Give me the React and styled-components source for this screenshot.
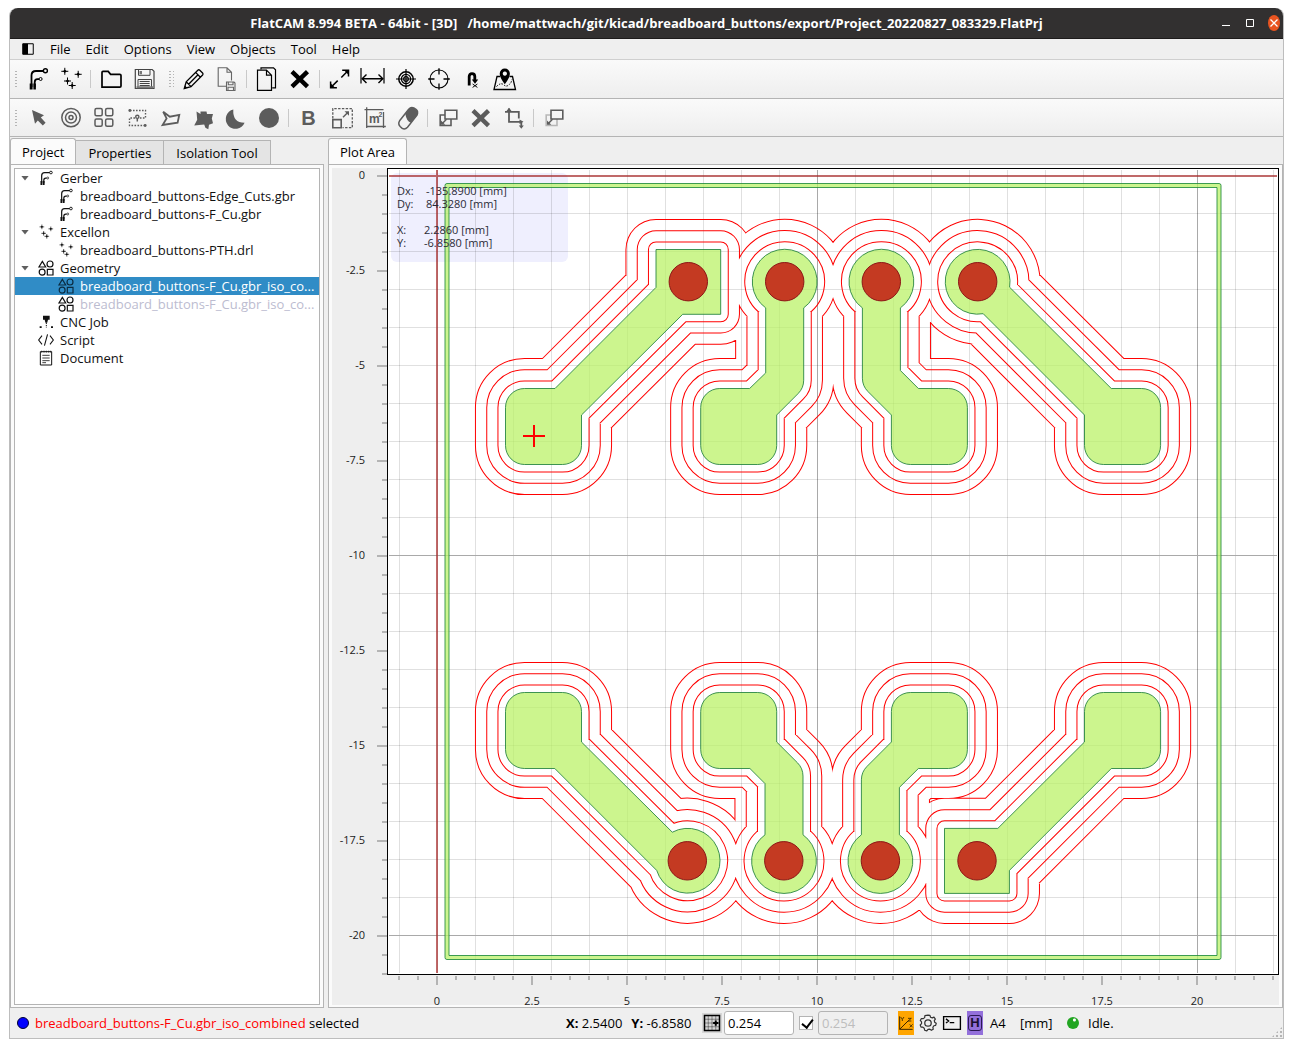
import { useState } from "react";
import styled, { createGlobalStyle, css } from "styled-components";

const GlobalStyle = createGlobalStyle`
    * {
        box-sizing: border-box;
    }

    body {
        margin: 0;
        background: #ffffff;
        color: #000000;
        font-family: "Open Sans", "Noto Sans", sans-serif;
        font-size: 13px;
        line-height: 18px;
    }

    button, input {
        font: inherit;
        color: inherit;
    }
`;

/* ---------- icons ---------- */

const Icon = styled.svg.attrs({ viewBox: "0 0 24 24", "aria-hidden": true })`
    width: ${(props) => props.$size || 24}px;
    height: ${(props) => props.$size || 24}px;
    flex: none;
    display: block;
    overflow: visible;
    fill: none;
    stroke: currentColor;
    stroke-width: 1.5;
`;

const GerberIcon = ({ size }) => (
    <Icon $size={size}>
        <path d="M5.5 20V8.5Q5.5 4 10 4H17.5M8.7 20V15.5Q8.7 12.2 11.5 12.2H13" strokeWidth="1.8" />
        <circle cx="19.4" cy="3.8" r="2" strokeWidth="1.4" />
        <circle cx="14.6" cy="12" r="1.5" strokeWidth="1" />
        <path d="M3.7 16.5H6.6V22.5H3.7ZM7.4 16.5H9.9V22.5H7.4Z" fill="currentColor" stroke="none" />
    </Icon>
);

const ExcellonIcon = ({ size }) => (
    <Icon $size={size}>
        <path d="M5.8 .8V7.8M2.3 4.3H9.3M19.2 3.8V10.8M15.7 7.3H22.7M8.5 10.5V17.5M5 14H12M13.2 15V22M9.7 18.5H16.7" strokeWidth="1" />
        <path d="M5.8 2.5L7.6 4.3 5.8 6.1 4 4.3ZM19.2 5.5L21 7.3 19.2 9.1 17.4 7.3ZM8.5 12.2L10.3 14 8.5 15.8 6.7 14ZM13.2 16.7L15 18.5 13.2 20.3 11.4 18.5Z" fill="currentColor" stroke="none" />
    </Icon>
);

const GeometryIcon = ({ size }) => (
    <Icon $size={size}>
        <path d="M6.5 2L11.5 10.5H1.5ZM14 14H22.5V22.5H14Z" strokeWidth="1.8" />
        <circle cx="18" cy="6" r="4.5" strokeWidth="1.8" />
        <circle cx="6.2" cy="18.2" r="4.4" strokeWidth="1.8" />
    </Icon>
);

const CncIcon = ({ size }) => (
    <Icon $size={size}>
        <path d="M7.5 2.5H17.5V8.5H15L13.8 13H11.2L10 8.5H7.5Z" fill="currentColor" stroke="none" />
        <path d="M12.5 13V20.5" strokeWidth="1.5" strokeDasharray="2 1.4" />
        <path d="M2.5 18.5H5.5V21H2.5ZM19.5 18.5H22.5V21H19.5Z" fill="currentColor" stroke="none" />
    </Icon>
);

const ScriptIcon = ({ size }) => (
    <Icon $size={size}>
        <path d="M6 5.5L1 12 6 18.5M18 5.5L23 12 18 18.5M14.3 3.5L9.7 20.5" strokeWidth="1.6" />
    </Icon>
);

const DocumentIcon = ({ size }) => (
    <Icon $size={size}>
        <path d="M3.5 2.5H20.5V22.5H3.5Z" strokeWidth="1.5" />
        <path d="M6.5 8H17.5M6.5 12H17.5M6.5 16H17.5M6.5 19H12" strokeWidth="1.2" />
        <path d="M5.5 1V4M9 1V4M12.5 1V4M16 1V4M19 1V4" strokeWidth="1" />
    </Icon>
);

const FolderIcon = () => (
    <Icon>
        <path d="M3 20.2V5.4Q3 4.4 4 4.4H9.2L11.6 7.4H20.8Q22 7.4 22 8.6V19Q22 20.2 20.8 20.2Z" strokeWidth="1.7" />
    </Icon>
);

const SaveIcon = () => (
    <Icon color="#444">
        <path d="M3.3 2.5H20.2L22 4.3V21.5H3.3Z" strokeWidth="1.2" />
        <path d="M6.5 2.5V8.3H18V2.5M6 21.5V12.5H19.5V21.5M7.7 14.5H17.7M7.7 16.5H17.7M7.7 18.5H17.7" strokeWidth="1" />
        <path d="M7.5 4H10V7.3H7.5ZM4.5 19.2H21V21.3H4.5Z" fill="#777" stroke="none" />
    </Icon>
);

const PencilIcon = () => (
    <Icon>
        <path d="M2.3 21.5L4.2 14.8 15.8 3.2Q16.8 2.3 17.8 3.2L20.6 6Q21.5 7 20.6 8L9 19.6ZM4.2 14.8L9 19.6M13.6 5.4L18.4 10.2M6.6 17.2L16 7.8" strokeWidth="1.3" />
        <path d="M2.3 21.5L3 18.6 5.2 20.8Z" fill="currentColor" stroke="none" />
    </Icon>
);

const DocSaveIcon = () => (
    <Icon color="#666">
        <path d="M11 19.3H3.2V.8H12L16.5 5.3V13.5M12 .8V5.3H16.5" strokeWidth="1.1" />
        <path d="M11.5 15H19L20 16V23.5H11.5ZM13.3 15V17.8H18V15M13 23.5V20.3H18.5V23.5" strokeWidth="1.1" />
    </Icon>
);

const CopyIcon = () => (
    <Icon>
        <path d="M2.5 3.2H11.5L16.5 8.2V23.3H2.5ZM11.5 3.2V8.2H16.5" strokeWidth="1.2" />
        <path d="M6 2.6V.8H18.5L20.5 2.8V20.8H17.2" strokeWidth="1.2" />
    </Icon>
);

const CrossIcon = () => (
    <Icon>
        <path d="M4 4.6L19.5 19.6M19.5 4.6L4 19.6" strokeWidth="4.4" />
    </Icon>
);

const ExpandIcon = () => (
    <Icon>
        <path d="M13.3 10.5L20 3.8M3 20.3L9.7 13.6M14.2 3.3H20.5V9.6M2.6 14.6V20.8H8.9" strokeWidth="1.5" />
        <path d="M16 3.3H20.5V7.8ZM2.6 16.3V20.8H7.1Z" fill="currentColor" stroke="none" />
    </Icon>
);

const DistanceIcon = () => (
    <Icon>
        <path d="M0 1V16.5M23 1V16.5" strokeWidth="1.2" />
        <path d="M1 11.7H22M5.5 7.5L1.2 11.7 5.5 16M17.5 7.5L21.8 11.7 17.5 16" strokeWidth="1.4" />
    </Icon>
);

const TargetIcon = () => (
    <Icon>
        <circle cx="12" cy="12" r="7.2" />
        <circle cx="12" cy="12" r="4.6" strokeWidth="1.2" />
        <circle cx="12" cy="12" r="2.3" strokeWidth="1.2" />
        <path d="M12 2V22M2 12H22" strokeWidth="1.2" />
    </Icon>
);

const CrosshairIcon = () => (
    <Icon>
        <circle cx="12" cy="12" r="9" strokeWidth="1.1" />
        <path d="M12 1.2V7.5M12 16.5V22.8M1.2 12H7.5M16.5 12H22.8" strokeWidth="1.3" />
    </Icon>
);

const SnapIcon = () => (
    <Icon>
        <path d="M9.2 18.5V9.6Q9.2 6.6 12 6.6T14.8 9.6V13" strokeWidth="2.8" />
        <path d="M11.8 12.5H18.2L15 16.8Z" fill="currentColor" stroke="none" />
        <path d="M12.6 17L17.4 20.4M17.4 17L12.6 20.4" strokeWidth="1" />
    </Icon>
);

const MapPinIcon = () => (
    <Icon>
        <path d="M7 9.5H4L1 22.5H22.5L19.5 9.5H16.5" strokeWidth="1.3" />
        <path d="M3.5 19.5Q8 15 11 18T18 15.5L19 12.5" strokeWidth="1" strokeDasharray="1.6 1.2" />
        <path d="M11.8 17.2Q6.7 10.5 6.7 6.7A5.1 5.1 0 0 1 16.9 6.7Q16.9 10.5 11.8 17.2ZM11.8 4.5A2.1 2.1 0 1 0 11.9 4.5Z" fill="currentColor" fillRule="evenodd" stroke="none" />
    </Icon>
);

const CursorIcon = () => (
    <Icon>
        <path d="M6 4L18 9.3 14.8 11.6 19.6 16.8 16.8 19.6 11.8 14.6 9 17.8Z" fill="currentColor" stroke="none" />
    </Icon>
);

const ApertureIcon = () => (
    <Icon>
        <circle cx="12" cy="11.6" r="9.2" />
        <circle cx="12" cy="11.6" r="5.5" />
        <circle cx="12" cy="11.6" r="2" />
    </Icon>
);

const ArrayIcon = () => (
    <Icon>
        <rect x="3" y="2.5" width="7.2" height="7.2" rx="1.5" />
        <rect x="13.6" y="2.5" width="7.2" height="7.2" rx="1.5" />
        <rect x="3" y="13" width="7.2" height="7.2" rx="1.5" />
        <rect x="13.6" y="13" width="7.2" height="7.2" rx="1.5" />
    </Icon>
);

const TrackIcon = () => (
    <Icon>
        <path d="M5 4.5H20.5V12H14M10 12H4.5V19.5H20" strokeWidth="1.4" strokeDasharray="1.6 1.4" />
        <circle cx="4.8" cy="4.5" r="1.4" fill="currentColor" stroke="none" />
        <circle cx="20.2" cy="19.5" r="1.4" fill="currentColor" stroke="none" />
        <circle cx="12.3" cy="10.8" r="1.6" strokeWidth="1.4" />
        <path d="M12.3 12.5V15.5" />
    </Icon>
);

const PolygonIcon = () => (
    <Icon>
        <path d="M5.2 5.8L11.8 10.7 21.3 8.8 19.6 16.6 4.6 19 8.6 12.4Z" strokeWidth="1.8" />
    </Icon>
);

const RegionIcon = () => (
    <Icon>
        <path d="M5.5 5.5L9.5 8V5.5H15.5L16 8H22L20.8 12.4 22 17.3 18 18.8 17.3 23.2 14.4 21.8 13.2 18.4 3.2 19.5 6.2 13.7Z" fill="currentColor" stroke="none" />
    </Icon>
);

const MoonIcon = () => (
    <Icon>
        <path d="M9.3 3.5Q8.5 16.8 20.6 16.8A9.8 9.8 0 1 1 9.3 3.5Z" fill="currentColor" stroke="none" />
    </Icon>
);

const DiscIcon = () => (
    <Icon>
        <circle cx="12" cy="12" r="10" fill="currentColor" stroke="none" />
    </Icon>
);

const ScaleIcon = () => (
    <Icon>
        <path d="M2.8 12.5V2.6H22.3V21.6H12.5" strokeDasharray="2.4 1.4" strokeWidth="1.3" />
        <path d="M2.8 13.6H11.2V21.8H2.8Z" strokeWidth="1.6" />
        <path d="M13 11.2L17.5 6.7" />
        <path d="M14.5 5.3H19V9.8Z" fill="currentColor" stroke="none" />
    </Icon>
);

const AreaIcon = () => (
    <Icon>
        <path d="M3.7 1.2V22M1.5 3.6H20.5M20.5 6V22M3.7 20.5H22.8" strokeWidth="1.3" />
        <text x="6" y="17" fontSize="12" fontWeight="bold" fill="currentColor" stroke="none">m</text>
        <text x="15.5" y="10.5" fontSize="7" fontWeight="bold" fill="currentColor" stroke="none">2</text>
    </Icon>
);

const EraserIcon = () => (
    <Icon>
        <path d="M3.6 14.8L12.7 3.2Q15 .6 17.8 2L20 3.4Q22.6 5.4 21 9.2L11.5 21.3Q9 24 6.2 22.4L4.4 20.8Q1.6 18 3.6 14.8Z" />
        <path d="M9.2 7.6L12.7 3.2Q15 .6 17.8 2L20 3.4Q22.6 5.4 21 9.2L15 16.8Q10.5 15.5 9.2 7.6Z" fill="currentColor" stroke="none" />
    </Icon>
);

const TransformIcon = ({ faint }) => (
    <Icon>
        <path d="M9 4.3H20.8V13H9Z" strokeWidth="1.6" />
        <path d="M9 9H4.2V19.5H15V13" strokeWidth="1.6" opacity={faint ? 0.4 : 1} />
        <path d="M5.8 18L10.5 13.3" />
        <path d="M5 14.5V18.8H9.3Z" fill="currentColor" stroke="none" />
    </Icon>
);

const MoveIcon = () => (
    <Icon>
        <path d="M7 2.5V15.8H19.3V21M3 5.8H16.8V12.5" strokeWidth="1.8" />
        <path d="M4.5 5L7 1.8 9.5 5ZM16.8 19.5H21.8L19.3 22.8ZM17.5 13.5V18L21.5 15.8Z" fill="currentColor" stroke="none" />
    </Icon>
);

const PanelIcon = () => (
    <Icon $size={12}>
        <path d="M1.5 1.5H22.5V22.5H1.5Z" strokeWidth="2" />
        <path d="M1.5 1.5H12V22.5H1.5Z" fill="currentColor" stroke="none" />
    </Icon>
);

const GridIcon = () => (
    <Icon $size={18}>
        <path d="M2 2H22V22H2Z" strokeWidth="2" />
        <path d="M7 2V22M12 2V22M17 2V22M2 7H22M2 12H22M2 17H22" strokeWidth="1" strokeOpacity=".5" />
        <path d="M17 8.5V15.5M13.5 12H20.5" strokeWidth="2.6" />
    </Icon>
);

const AxesIcon = () => (
    <Icon $size={16} color="#3a2600">
        <path d="M2.5 2V21.5H22M2.5 21.5L15 9" strokeWidth="1.5" />
        <path d="M4 3L6.5 6.5M9 3L6.5 6.5V9M15 5H20L15 9H20M17.5 14L22 18.5M22 14L17.5 18.5" strokeWidth="1.3" />
    </Icon>
);

const GearIcon = () => (
    <Icon $size={18} color="#333">
        <path d="M12 1.5L14.6 1.8 15.4 4.3 17.7 5.2 20 4.2 21.8 6.8 20.4 8.9 20.9 11 23 12.3 22.2 15.2 19.8 15.7 18.5 17.8 19 20.2 16.4 21.7 14.5 20.2 12 20.6 10.4 22.5 7.5 21.6 7 19 5.2 17.6 2.7 17.5 1.6 14.7 3.4 12.8V10.6L1.7 8.6 3.2 6 5.8 6.2 7.5 4.8 7.9 2.2Z" strokeWidth="1.6" strokeLinejoin="round" />
        <circle cx="12" cy="12" r="4.3" strokeWidth="1.7" />
    </Icon>
);

const ShellIcon = () => (
    <Icon $size={18}>
        <path d="M.8 3.5H23.2V20.5H.8Z" strokeWidth="1.8" />
        <path d="M4 6.5L7.5 9.3 4 12M9 11.5H15" strokeWidth="1.8" />
    </Icon>
);

/* ---------- window frame ---------- */

const Desktop = styled.div`
    height: 100vh;
    padding: 8px 9px 9px;
    display: flex;
`;

const Window = styled.main`
    flex: 1;
    min-width: 0;
    display: flex;
    flex-direction: column;
    background: #efefef;
    border: 1px solid #bdbdbd;
    border-top: 0;
    border-radius: 8px 8px 0 0;
`;

const TitleBar = styled.header`
    height: 31px;
    display: grid;
    grid-template-columns: 1fr auto 1fr;
    align-items: center;
    background: #323030;
    border-bottom: 1px solid #1d1b1b;
    border-radius: 8px 8px 0 0;
    color: #ffffff;
`;

const Title = styled.h1`
    grid-column: 2;
    margin: 0;
    font-size: 13px;
    line-height: 18px;
    font-weight: 700;
    white-space: pre;
`;

const WindowButtons = styled.div`
    display: flex;
    justify-content: flex-end;
    gap: 12px;
    padding-right: 3px;
`;

const WindowButton = styled.button`
    width: 12px;
    height: 16px;
    padding: 0;
    border: 0;
    border-radius: 50%;
    background: ${(props) => (props.$close ? "#e95420" : "transparent")};

    svg {
        display: block;
    }
`;

const MenuBar = styled.nav`
    height: 21px;
    display: flex;
    align-items: center;
    gap: 15px;
    padding-left: 12px;
    border-bottom: 1px solid #cfcfcf;
`;

const MenuItem = styled.button`
    padding: 0;
    border: 0;
    background: none;

    &:first-child {
        margin-right: 1px;
    }
`;

/* ---------- toolbars ---------- */

const ToolBar = styled.div`
    height: ${(props) => props.$height}px;
    display: flex;
    align-items: center;
    background: linear-gradient(#fafafa, #eeeeee);
    border-bottom: 1px solid #b4b4b4;
    color: ${(props) => (props.$dim ? "#5c5c5c" : "#000000")};
`;

const Handle = styled.span`
    width: ${(props) => (props.$first ? 11 : 17)}px;
    height: 18px;
    padding-left: ${(props) => (props.$first ? 4 : 8)}px;
    background: radial-gradient(circle, #b5b5b5 1px, transparent 1px) content-box;
    background-size: 4px 3px;
    border-right: 3px solid transparent;
`;

const ToolButton = styled.button`
    width: 33px;
    height: 32px;
    padding: 0;
    display: flex;
    align-items: center;
    justify-content: center;
    border: 0;
    background: none;
    font-family: "Liberation Sans", Arial, sans-serif;
    font-size: 20px;
    font-weight: 700;
`;

const Separator = styled.span`
    width: 1px;
    height: 18px;
    margin: 0 3px;
    background: #c9c9c9;
`;

/* ---------- panes ---------- */

const Workspace = styled.div`
    flex: 1;
    min-height: 0;
    display: flex;
    gap: 4px;
    padding-top: 1px;
`;

const Side = styled.section`
    width: 314px;
    flex: none;
    display: flex;
    flex-direction: column;
`;

const Main = styled.section`
    flex: 1;
    min-width: 0;
    display: flex;
    flex-direction: column;
`;

const Tabs = styled.div`
    height: 27px;
    display: flex;
    align-items: flex-end;
`;

const Tab = styled.button`
    height: 25px;
    padding: 0 12px;
    border: 1px solid #b4b4b4;
    border-left-width: 0;
    background: #e4e4e4;

    ${(props) => props.$active && css`
        height: 27px;
        padding: 0 11px;
        border-left-width: 1px;
        border-bottom-color: #fbfbfb;
        border-radius: 3px 3px 0 0;
        background: #fbfbfb;
    `}
`;

const Pane = styled.div`
    flex: 1;
    min-height: 0;
    display: flex;
    margin-top: -1px;
    padding: 3px 3px 2px;
    background: #fbfbfb;
    border: 1px solid #b4b4b4;
    border-top: 0;
    box-shadow: inset 0 1px 0 #b4b4b4;
`;

const Tree = styled.ul`
    flex: 1;
    min-width: 0;
    margin: 1px 0 0;
    padding: 0;
    list-style: none;
    background: #ffffff;
    border: 1px solid #b4b4b4;
`;

const TreeRow = styled.li`
    height: 18px;
    display: flex;
    align-items: center;
    gap: 6px;
    padding-left: ${(props) => (props.$child ? 43 : 6)}px;
    background: ${(props) => (props.$selected ? "#308cc6" : "none")};
    color: ${(props) => (props.$selected ? "#0b2c42" : "#111111")};
    white-space: nowrap;
    overflow: hidden;
`;

const Branch = styled.span`
    width: 11px;
    height: 5px;

    &::before {
        content: "";
        display: block;
        width: 8px;
        height: 5px;
        background: ${(props) => (props.$open ? "#5f5f5f" : "none")};
        clip-path: polygon(0 0, 100% 0, 50% 100%);
    }
`;

const TreeLabel = styled.span`
    color: ${(props) => props.$color || "#111111"};
`;

const PlotPane = styled(Pane)`
    padding: 4px 3px 2px;
`;

const Plot = styled.svg`
    flex: 1;
    min-width: 0;
    width: 100%;
    height: 100%;
    display: block;
    overflow: visible;
    background: #eeeeee;
    font-family: "Open Sans", "Noto Sans", sans-serif;
    font-size: 11px;
`;

/* ---------- status bar ---------- */

const StatusBar = styled.footer`
    height: 30px;
    display: flex;
    align-items: center;
    padding-left: 7px;
    white-space: nowrap;
`;

const Dot = styled.span`
    width: 12px;
    height: 12px;
    flex: none;
    border-radius: 50%;
    background: ${(props) => props.$fill};
    border: ${(props) => props.$edge || "0"};
`;

const Message = styled.span`
    flex: 1;
    min-width: 0;
    padding-left: 6px;
    overflow: hidden;

    em {
        color: #ff0000;
        font-style: normal;
    }
`;

const Position = styled.div`
    width: 136px;
    display: flex;
    gap: 9px;
`;

const StatusButton = styled.button`
    width: ${(props) => props.$width || 16}px;
    height: ${(props) => (props.$short ? 20 : 24)}px;
    margin-right: ${(props) => props.$after || 0}px;
    padding: 0;
    display: flex;
    flex: none;
    align-items: center;
    justify-content: center;
    border: 0;
    background: ${(props) => props.$fill || "none"};
`;

const GridInput = styled.input`
    width: 70px;
    height: 24px;
    flex: none;
    padding: 0 3px;
    border: 1px solid #b4b4b4;
    border-radius: 3px;
    background: #ffffff;

    &:disabled {
        margin-right: 10px;
        background: #efefef;
        color: #bdbdbd;
    }
`;

const CheckBox = styled.input`
    appearance: none;
    width: 14px;
    height: 14px;
    margin: 0 5px;
    flex: none;
    background: #ffffff;
    border: 1px solid #b4b4b4;

    &:checked::after {
        content: "";
        display: block;
        width: 5px;
        height: 9px;
        margin: 0 0 0 4px;
        border: solid #000000;
        border-width: 0 2px 2px 0;
        transform: rotate(38deg);
    }
`;

const HudKey = styled.span`
    width: 14px;
    height: 16px;
    border: 1px solid #2c1a55;
    border-radius: 3px;
    color: #1a1030;
    font: 700 13px/14px "Liberation Sans", Arial, sans-serif;
`;

const StatusText = styled.span`
    width: ${(props) => props.$width}px;
    padding-left: ${(props) => props.$before || 0}px;
    flex: none;
`;

const Grip = styled.span`
    width: 12px;
    height: 12px;
    flex: none;
    align-self: flex-end;
    background: radial-gradient(circle, #b5b5b5 1px, transparent 1px);
    background-size: 4px 4px;
    clip-path: polygon(100% 0, 100% 100%, 0 100%);
`;

/* ---------- plot ---------- */

const ORIGIN_X = 437;
const ORIGIN_Y = 175;
const MM = 38;

const range = (from, to, step = 1) => {
    const list = [];
    for (let v = from; v <= to; v += step) list.push(v);
    return list;
};

const TRACES = [
    "M656 249.5H720.7V314.3H682.7L581.5 415V445.5A19 19 0 0 1 562.5 464.5H524.5A19 19 0 0 1 505.5 445.5V407.5A19 19 0 0 1 524.5 388.5H555L656 287.4Z",
    "M765.7 307.9A32.4 32.4 0 1 1 803.7 307.9V380.2A19 19 0 0 1 798.1 393.6L776.7 415V445.5A19 19 0 0 1 757.7 464.5H719.7A19 19 0 0 1 700.7 445.5V407.5A19 19 0 0 1 719.7 388.5H749.6L765.7 372.9Z",
    "M862.4 307.9A32.4 32.4 0 1 1 900.4 307.9V370.5L918.4 388.5H948.4A19 19 0 0 1 967.4 407.5V445.5A19 19 0 0 1 948.4 464.5H910.4A19 19 0 0 1 891.4 445.5V415L868 391.6A19 19 0 0 1 862.4 378.2Z",
    "M1009.6 287.2L1111.3 388.5H1141.6A19 19 0 0 1 1160.6 407.5V445.5A19 19 0 0 1 1141.6 464.5H1103.5A19 19 0 0 1 1084.5 445.5V415L983.2 313.7A32.4 32.4 0 1 1 1009.6 287.2Z",
    "M524.5 692.5H562.5A19 19 0 0 1 581.5 711.5V742L672.3 832.2A32.4 32.4 0 1 1 656.7 870.4L554.8 768.5H524.5A19 19 0 0 1 505.5 749.5V711.5A19 19 0 0 1 524.5 692.5Z",
    "M719.7 692.5H757.7A19 19 0 0 1 776.7 711.5V742L797.4 762.7A19 19 0 0 1 803 776.1V834.8A32.4 32.4 0 1 1 765 834.8V783.6L749.9 768.5H719.7A19 19 0 0 1 700.7 749.5V711.5A19 19 0 0 1 719.7 692.5Z",
    "M910.4 692.5H948.4A19 19 0 0 1 967.4 711.5V749.5A19 19 0 0 1 948.4 768.5H918.4L899.4 787.4V834.8A32.4 32.4 0 1 1 861.4 834.8V779.8A19 19 0 0 1 867 766.4L891.4 742V711.5A19 19 0 0 1 910.4 692.5Z",
    "M944.5 828.4H997.8L1084.5 742V711.5A19 19 0 0 1 1103.5 692.5H1141.6A19 19 0 0 1 1160.6 711.5V749.5A19 19 0 0 1 1141.6 768.5H1111.3L1009.4 870.4V893.4H944.5Z",
];

const DRILLS = [
    [688.3, 281.7], [784.7, 281.7], [881.3, 281.7], [977.7, 281.7],
    [687.3, 860.8], [783.8, 860.8], [880.4, 860.8], [977, 860.8],
];

// distance of each isolation pass from the copper edge
const PASSES = [7.4, 18.6, 29.9];

function Isolation() {
    return (
        <>
            <defs>
                <path id="copper" d={TRACES.join("")} strokeLinejoin="round" />
                {PASSES.map((d, i) => (
                    <mask key={d} id={`pass-${i}`} maskUnits="userSpaceOnUse" x="388" y="169" width="890" height="805">
                        <use href="#copper" fill="#fff" stroke="#fff" strokeWidth={2 * d + 1.3} />
                        <use href="#copper" fill="#000" stroke="#000" strokeWidth={2 * d - 0.7} />
                    </mask>
                ))}
            </defs>
            {PASSES.map((d, i) => (
                <rect key={d} x="388" y="169" width="890" height="805" fill="#ff0000" mask={`url(#pass-${i})`} />
            ))}
        </>
    );
}

function PlotArea() {
    const columns = range(-1, 22);
    const rows = range(1, 20);
    const major = (mm) => mm === 10 || mm === 20;

    return (
        <Plot role="img" aria-label="Plot">
            <g transform="translate(-332 -168)">
                <rect x="387.5" y="168.5" width="891" height="806" fill="#ffffff" stroke="#000000" />

                <rect x="391" y="173" width="177" height="89" rx="6" fill="#efeffe" />

                {columns.map((mm) => (
                    <path key={mm} d={`M${ORIGIN_X + mm * MM + 0.5} 170V973`} stroke={major(mm) ? "#a9a9a9" : "#000000"} strokeOpacity={major(mm) ? 1 : 0.12} />
                ))}
                {rows.map((mm) => (
                    <path key={mm} d={`M389 ${ORIGIN_Y + mm * MM + 0.5}H1277`} stroke={major(mm) ? "#a9a9a9" : "#000000"} strokeOpacity={major(mm) ? 1 : 0.12} />
                ))}
                <path d="M437 170V973M389 176H1277" stroke="#a52a2a" strokeWidth="2" strokeOpacity=".7" />

                <path
                    d="M447 183.5H1219A2 2 0 0 1 1221 185.5V957.5A2 2 0 0 1 1219 959.5H447A2 2 0 0 1 445 957.5V185.5A2 2 0 0 1 447 183.5ZM449 187.5V955.5H1217V187.5Z"
                    fill="#bbf268" fillOpacity=".75" fillRule="evenodd" stroke="#1f8a3c" strokeOpacity=".85"
                />
                <use href="#copper" fill="#bbf268" fillOpacity=".75" stroke="#20803c" strokeOpacity=".85" />
                <Isolation />
                {DRILLS.map(([x, y]) => (
                    <circle key={`${x}-${y}`} cx={x} cy={y} r="19.2" fill="#c43a22" stroke="#8c1616" />
                ))}
                <path d="M523 436H545M534 425V447" stroke="#ff0000" strokeWidth="2" />

                <g fill="#2b2b36">
                    <text x="397" y="195">Dx:</text>
                    <text x="426" y="195">-135.8900 [mm]</text>
                    <text x="397" y="208">Dy:</text>
                    <text x="426" y="208">84.3280 [mm]</text>
                    <text x="397" y="234">X:</text>
                    <text x="424" y="234">2.2860 [mm]</text>
                    <text x="397" y="247">Y:</text>
                    <text x="424" y="247">-6.8580 [mm]</text>
                </g>

                <g stroke="#b4b4b4" strokeWidth="2">
                    {range(0, 42).map((n) => (
                        <path key={n} d={`M${n % 5 ? 382 : 377} ${ORIGIN_Y + n * 19 + 1}H387`} />
                    ))}
                    {range(-2, 44).map((n) => (
                        <path key={n} d={`M${ORIGIN_X + n * 19} 976V${n % 5 ? 980 : 985}`} />
                    ))}
                </g>
                <g fill="#222222" textAnchor="end">
                    {range(0, 20, 2.5).map((mm) => (
                        <text key={mm} x="365" y={ORIGIN_Y + mm * MM + 4}>{mm ? -mm : 0}</text>
                    ))}
                </g>
                <g fill="#222222" textAnchor="middle">
                    {range(0, 20, 2.5).map((mm) => (
                        <text key={mm} x={ORIGIN_X + mm * MM} y="1005">{mm}</text>
                    ))}
                </g>
            </g>
        </Plot>
    );
}

/* ---------- data ---------- */

const MENUS = ["File", "Edit", "Options", "View", "Objects", "Tool", "Help"];

const MAIN_TOOLS = [
    ["Open Gerber", GerberIcon], ["Open Excellon", ExcellonIcon], "sep",
    ["Open project", FolderIcon], ["Save project", SaveIcon], "handle",
    ["Editor", PencilIcon], ["Save object", DocSaveIcon], "sep",
    ["Copy", CopyIcon], ["Delete", CrossIcon], "sep",
    ["Measure", ExpandIcon], ["Distance", DistanceIcon], ["Origin", TargetIcon],
    ["Jump to", CrosshairIcon], ["Snap", SnapIcon], ["Locate", MapPinIcon],
];

const EDIT_TOOLS = [
    ["Select", CursorIcon], ["Pad", ApertureIcon], ["Pad array", ArrayIcon], ["Track", TrackIcon],
    ["Region", PolygonIcon], ["Poligonize", RegionIcon], ["Semidisc", MoonIcon], ["Disc", DiscIcon], "sep",
    ["Buffer", null], ["Scale", ScaleIcon], ["Area", AreaIcon], ["Eraser", EraserIcon], "sep",
    ["Copy shape", TransformIcon], ["Delete shape", CrossIcon], ["Transform", MoveIcon], "sep",
    ["Move shape", () => <TransformIcon faint />],
];

const OBJECTS = [
    { label: "Gerber", icon: GerberIcon, open: true },
    { label: "breadboard_buttons-Edge_Cuts.gbr", icon: GerberIcon, child: true },
    { label: "breadboard_buttons-F_Cu.gbr", icon: GerberIcon, child: true },
    { label: "Excellon", icon: ExcellonIcon, open: true },
    { label: "breadboard_buttons-PTH.drl", icon: ExcellonIcon, child: true },
    { label: "Geometry", icon: GeometryIcon, open: true },
    { label: "breadboard_buttons-F_Cu.gbr_iso_co...", icon: GeometryIcon, child: true, selected: true, color: "#ffffff" },
    { label: "breadboard_buttons-F_Cu.gbr_iso_co...", icon: GeometryIcon, child: true, color: "#bcbcd0" },
    { label: "CNC Job", icon: CncIcon },
    { label: "Script", icon: ScriptIcon },
    { label: "Document", icon: DocumentIcon },
];

function Tools({ items }) {
    return items.map((item, i) => {
        if (item === "sep") return <Separator key={i} />;
        if (item === "handle") return <Handle key={i} />;
        const [label, Drawing] = item;
        return (
            <ToolButton key={i} type="button" aria-label={label}>
                {Drawing ? <Drawing /> : "B"}
            </ToolButton>
        );
    });
}

export default function App() {
    const [grid, setGrid] = useState("0.254");
    const [linked, setLinked] = useState(true);

    return (
        <Desktop>
            <GlobalStyle />
            <Window>
                <TitleBar>
                    <Title>{"FlatCAM 8.994 BETA - 64bit - [3D]   /home/mattwach/git/kicad/breadboard_buttons/export/Project_20220827_083329.FlatPrj"}</Title>
                    <WindowButtons>
                        <WindowButton type="button" aria-label="Minimize">
                            <svg width="12" height="16"><path d="M2 10.5H10" stroke="#fff" /></svg>
                        </WindowButton>
                        <WindowButton type="button" aria-label="Maximize">
                            <svg width="12" height="16"><path d="M2.5 4.5H9.5V11.5H2.5Z" fill="none" stroke="#fff" /></svg>
                        </WindowButton>
                        <WindowButton type="button" aria-label="Close" $close>
                            <svg width="12" height="16"><path d="M2.5 4.5L9.5 11.5M9.5 4.5L2.5 11.5" stroke="#fff" strokeWidth="1.3" /></svg>
                        </WindowButton>
                    </WindowButtons>
                </TitleBar>

                <MenuBar>
                    <MenuItem type="button" aria-label="Toggle panel"><PanelIcon /></MenuItem>
                    {MENUS.map((name) => (
                        <MenuItem key={name} type="button">{name}</MenuItem>
                    ))}
                </MenuBar>

                <ToolBar $height={39}>
                    <Handle $first />
                    <Tools items={MAIN_TOOLS} />
                </ToolBar>
                <ToolBar $height={38} $dim>
                    <Handle $first />
                    <Tools items={EDIT_TOOLS} />
                </ToolBar>

                <Workspace>
                    <Side>
                        <Tabs>
                            <Tab type="button" $active>Project</Tab>
                            <Tab type="button">Properties</Tab>
                            <Tab type="button">Isolation Tool</Tab>
                        </Tabs>
                        <Pane>
                            <Tree>
                                {OBJECTS.map(({ label, icon: Drawing, child, open, selected, color }, i) => (
                                    <TreeRow key={i} $child={child} $selected={selected}>
                                        {!child && <Branch $open={open} />}
                                        <Drawing size={16} />
                                        <TreeLabel $color={color}>{label}</TreeLabel>
                                    </TreeRow>
                                ))}
                            </Tree>
                        </Pane>
                    </Side>
                    <Main>
                        <Tabs>
                            <Tab type="button" $active>Plot Area</Tab>
                        </Tabs>
                        <PlotPane>
                            <PlotArea />
                        </PlotPane>
                    </Main>
                </Workspace>

                <StatusBar>
                    <Dot $fill="#0000ff" $edge="1px solid #000033" />
                    <Message><em>breadboard_buttons-F_Cu.gbr_iso_combined</em> selected</Message>
                    <Position>
                        <span><b>X:</b> 2.5400</span>
                        <span><b>Y:</b> -6.8580</span>
                    </Position>
                    <StatusButton type="button" aria-label="Snap to grid" $width={20} $short $fill="#d6d6d6" $after={2}><GridIcon /></StatusButton>
                    <GridInput aria-label="Grid X" value={grid} onChange={(e) => setGrid(e.target.value)} />
                    <CheckBox type="checkbox" aria-label="Link grid" checked={linked} onChange={(e) => setLinked(e.target.checked)} />
                    <GridInput aria-label="Grid Y" value={grid} disabled readOnly />
                    <StatusButton type="button" aria-label="Axes" $fill="#ffa500"><AxesIcon /></StatusButton>
                    <StatusButton type="button" aria-label="Preferences" $width={28}><GearIcon /></StatusButton>
                    <StatusButton type="button" aria-label="Shell" $width={20} $after={5}><ShellIcon /></StatusButton>
                    <StatusButton type="button" aria-label="HUD" $fill="#9370db" $after={7}><HudKey>H</HudKey></StatusButton>
                    <StatusText $width={30}>A4</StatusText>
                    <StatusText $width={47}>[mm]</StatusText>
                    <Dot $fill="radial-gradient(circle at 62% 25%, #ffffff 1px, #22a522 2px)" />
                    <StatusText $width={192} $before={9}>Idle.</StatusText>
                    <Grip />
                </StatusBar>
            </Window>
        </Desktop>
    );
}
